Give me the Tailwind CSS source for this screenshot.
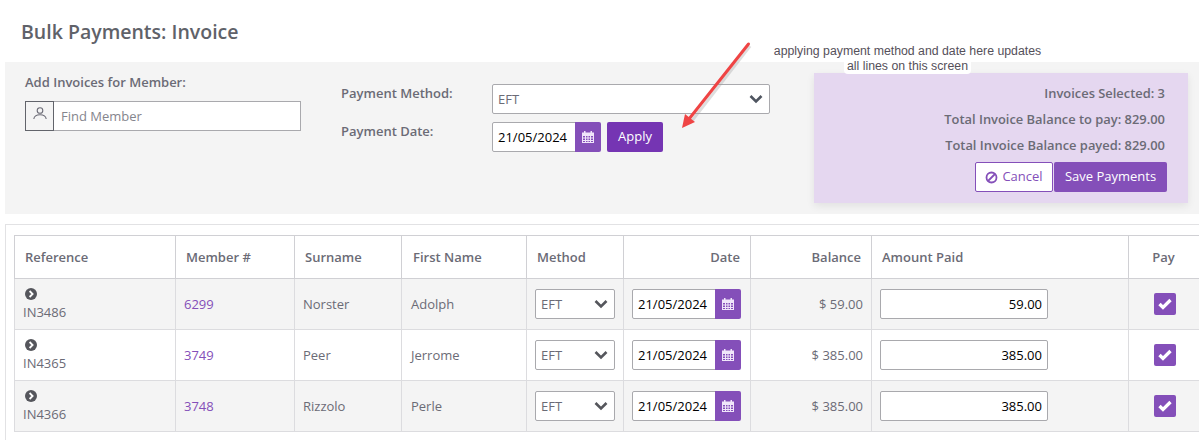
<!DOCTYPE html>
<html lang="en">
<head>
    <meta charset="UTF-8">
    <title>Bulk Payments: Invoice</title>
    <script src="https://cdn.jsdelivr.net/npm/@tailwindcss/browser@4"></script>
</head>
<body class="relative w-[1199px] h-[440px] overflow-hidden bg-white font-['Open_Sans',sans-serif] text-[13px] text-[#6b6b76]">

<h1 class="pl-[21px] pt-[18px] h-[62px] text-[19.5px] leading-[27px] font-semibold text-[#5f6269]">Bulk Payments: Invoice</h1>

<!-- top panel -->
<section class="ml-[5px] h-[152px] bg-[#f4f4f4] flex">
    <div class="ml-[20px] w-[276px] pt-[11px]">
        <div class="font-semibold leading-[18px]">Add Invoices for Member:</div>
        <div class="mt-[10px] h-[30px] flex bg-white border border-[#a9a9ad]">
            <span class="w-[29px] shrink-0 -my-px -ml-px h-[30px] border border-[#62646b] bg-[#f4f4f4] flex justify-center pt-[4px]">
                <svg width="16" height="16" viewBox="0 0 16 16" fill="none" stroke="#6b6b76" stroke-width="1.100"><circle cx="8" cy="4.500" r="2.800"/><path d="M1.800 13c.4-3 3-4.200 6.200-4.200s5.800 1.200 6.200 4.200"/></svg>
            </span>
            <span class="pl-[7px] leading-[29px] text-[#85858d]">Find Member</span>
        </div>
    </div>

    <div class="ml-[40px] w-[429px] pt-[22px]">
        <div class="flex h-[30px]">
            <label class="w-[151px] font-semibold leading-[18px]">Payment Method:</label>
            <div class="w-[278px] h-[30px] flex items-center justify-between bg-white border border-[#a9a9ad] rounded-[2px] pl-[5px] pr-[6px]">
                <span class="pt-[2px]">EFT</span>
                <svg width="14" height="10" viewBox="0 0 14 10" fill="none" stroke="#4f5560" stroke-width="2.600"><path d="M1.500 2l5.500 5.500L12.500 2"/></svg>
            </div>
        </div>
        <div class="flex h-[30px] mt-[8px]">
            <label class="w-[151px] font-semibold leading-[18px]">Payment Date:</label>
            <div class="w-[84px] h-[30px] bg-white border border-[#a9a9ad] rounded-l-[2px] pl-[5px] text-black leading-[28px]">21/05/2024</div>
            <span class="w-[26px] h-[30px] -ml-px bg-[#844fb9] rounded-r-[2px] flex items-center justify-center">
                <svg width="14" height="14" viewBox="0 0 14 14"><path fill="#f0e6fa" fill-rule="evenodd" d="M1 2.500h2V1h1.500v1.500h5V1H11v1.500h2V13H1zM2 6v1.500h2V6zm3 0v1.500h1.500V6zm2.500 0v1.500H9V6zM10 6v1.500h2V6zM2 8.500V10h2V8.500zm3 0V10h1.500V8.500zm2.500 0V10H9V8.500zm2.500 0V10h2V8.500zM2 11v1h2v-1zm3 0v1h1.500v-1zm2.500 0v1H9v-1zm2.500 0v1h2v-1z"/></svg>
            </span>
            <button class="ml-[6px] w-[56px] h-[30px] bg-[#7535b3] text-white rounded-[2px]">Apply</button>
        </div>
    </div>

    <div class="ml-[44px] mt-[11px] w-[374px] h-[130px] bg-[#e5d7f0] shadow-[0_3px_8px_rgba(0,0,0,0.08)] pr-[23px] pt-[11px] text-right text-[12.9px] font-semibold">
        <div class="leading-[18px]">Invoices Selected: 3</div>
        <div class="leading-[18px] mt-[8px]">Total Invoice Balance to pay: 829.00</div>
        <div class="leading-[18px] mt-[8px]">Total Invoice Balance payed: 829.00</div>
        <div class="flex justify-end mt-[8px] text-[13px] font-normal -mr-[2px]">
            <button class="w-[78px] h-[30px] bg-white border border-[#844fb9] rounded-[2px] text-[#844fb9] flex items-center justify-center gap-[4px]">
                <svg width="13" height="13" viewBox="0 0 13 13" fill="none" stroke="#844fb9" stroke-width="1.800"><circle cx="6.500" cy="6.500" r="5"/><path d="M3 10l7-7"/></svg>
                Cancel
            </button>
            <button class="ml-px w-[113px] h-[30px] bg-[#844fb9] text-white rounded-[2px]">Save Payments</button>
        </div>
    </div>
</section>

<!-- invoices table -->
<section class="mt-[10px] ml-[5px] h-[216px] border-l border-t border-[#e2e2e4] pl-[8px] pt-[10px]">
    <table class="table-fixed border-collapse w-[1186px] border-l border-[#d5d5d9]">
        <colgroup>
            <col class="w-[161px]"><col class="w-[119px]"><col class="w-[107px]"><col class="w-[125px]"><col class="w-[97px]"><col class="w-[127px]"><col class="w-[121px]"><col class="w-[257px]"><col class="w-[72px]">
        </colgroup>
        <thead>
            <tr class="h-[43px]">
                <th class="border border-[#d0d0d4] text-left font-semibold pl-[10px] pt-[2px]">Reference</th>
                <th class="border border-[#d0d0d4] text-left font-semibold pl-[10px] pt-[2px]">Member #</th>
                <th class="border border-[#d0d0d4] text-left font-semibold pl-[10px] pt-[2px]">Surname</th>
                <th class="border border-[#d0d0d4] text-left font-semibold pl-[11px] pt-[2px]">First Name</th>
                <th class="border border-[#d0d0d4] text-left font-semibold pl-[10px] pt-[2px]">Method</th>
                <th class="border border-[#d0d0d4] text-right font-semibold pr-[10px] pt-[2px]">Date</th>
                <th class="border border-[#d0d0d4] text-right font-semibold pr-[10px] pt-[2px]">Balance</th>
                <th class="border border-[#d0d0d4] text-left font-semibold pl-[10px] pt-[2px]">Amount Paid</th>
                <th class="border border-[#d0d0d4] text-center font-semibold pr-[2px] pt-[2px]">Pay</th>
            </tr>
        </thead>
        <tbody id="rows"></tbody>
    </table>
</section>

<!-- annotation pasted over the screenshot -->
<svg class="absolute left-[670px] top-[35px]" width="90" height="105" viewBox="670 35 90 105">
    <path d="M749 44L690 120" stroke="#a0a0a0" stroke-opacity="0.35" stroke-width="3" transform="translate(1 2)"/>
    <path d="M748.500 44L689 119" stroke="#ef4444" stroke-width="3" stroke-linecap="round"/>
    <path d="M682 128l3-14 10 8z" fill="#ef4444"/>
</svg>
<div class="absolute left-[770px] top-[44px] w-[275px] text-center font-['Liberation_Sans',sans-serif] text-[12.3px] leading-[15px] text-[#55505a]">
    <div class="whitespace-nowrap">applying payment method and date here updates</div>
    <div class="mx-auto w-fit bg-white rounded-b-[4px] px-[3px]">all lines on this screen</div>
</div>

<script>
const invoices = [
    { ref: 'IN3486', member: '6299', surname: 'Norster', first: 'Adolph', balance: '59.00', shaded: true },
    { ref: 'IN4365', member: '3749', surname: 'Peer', first: 'Jerrome', balance: '385.00', shaded: false },
    { ref: 'IN4366', member: '3748', surname: 'Rizzolo', first: 'Perle', balance: '385.00', shaded: true },
];

document.getElementById('rows').innerHTML = invoices.map(inv => `
    <tr class="h-[51px] ${inv.shaded ? 'bg-[#f4f4f4]' : 'bg-white'}">
        <td class="border border-[#dcdcdf] pl-[8px]">
            <svg class="block ml-[2px]" width="12" height="12" viewBox="0 0 12 12"><circle cx="6" cy="6" r="6" fill="#55565c"/><path d="M4.600 3l3 3-3 3" fill="none" stroke="#fff" stroke-width="1.800"/></svg>
            <div class="mt-[4px] leading-[16px]">${inv.ref}</div>
        </td>
        <td class="border border-[#dcdcdf] pl-[8px] pt-[2px] text-[#844fb9]">${inv.member}</td>
        <td class="border border-[#dcdcdf] pl-[8px] pt-[2px]">${inv.surname}</td>
        <td class="border border-[#dcdcdf] pl-[9px] pt-[2px]">${inv.first}</td>
        <td class="border border-[#dcdcdf] pl-[8px]">
            <div class="w-[80px] h-[30px] flex items-center justify-between bg-white border border-[#a9a9ad] rounded-[2px] pl-[5px] pr-[6px]"><span class="pt-[2px]">EFT</span><svg width="14" height="10" viewBox="0 0 14 10" fill="none" stroke="#55565c" stroke-width="2.600"><path d="M1.500 2l5.500 5.500L12.500 2"/></svg></div>
        </td>
        <td class="border border-[#dcdcdf] pl-[8px]">
            <div class="flex w-[109px] h-[30px]">
                <div class="w-[84px] bg-white border border-[#a9a9ad] rounded-l-[2px] pl-[5px] text-black leading-[28px]">21/05/2024</div>
                <span class="w-[26px] -ml-px bg-[#844fb9] rounded-r-[2px] flex items-center justify-center"><svg width="14" height="14" viewBox="0 0 14 14"><path fill="#f0e6fa" fill-rule="evenodd" d="M1 2.500h2V1h1.500v1.500h5V1H11v1.500h2V13H1zM2 6v1.500h2V6zm3 0v1.500h1.500V6zm2.500 0v1.500H9V6zM10 6v1.500h2V6zM2 8.500V10h2V8.500zm3 0V10h1.500V8.500zm2.500 0V10H9V8.500zm2.500 0V10h2V8.500zM2 11v1h2v-1zm3 0v1h1.500v-1zm2.500 0v1H9v-1zm2.500 0v1h2v-1z"/></svg></span>
            </div>
        </td>
        <td class="border border-[#dcdcdf] text-right pr-[8px] pt-[2px]">$ ${inv.balance}</td>
        <td class="border border-[#dcdcdf] pl-[8px]"><div class="w-[168px] h-[30px] bg-white border border-[#a9a9ad] rounded-[2px] pr-[5px] text-right text-black leading-[28px]">${inv.balance}</div></td>
        <td class="border border-[#dcdcdf]"><span class="mx-auto w-[22px] h-[22px] bg-[#844fb9] rounded-[2px] flex items-center justify-center"><svg width="14" height="12" viewBox="0 0 14 12" fill="none" stroke="#fff" stroke-width="3.300"><path d="M1.500 6l3.500 3.500L12.500 2"/></svg></span></td>
    </tr>`).join('');
</script>

</body>
</html>
